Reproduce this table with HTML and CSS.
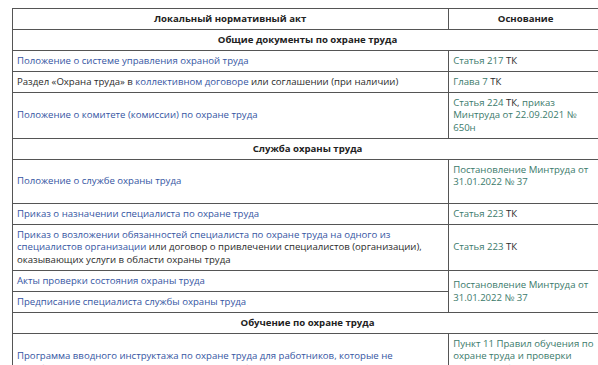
FILE: index.html
```html
<!DOCTYPE html>
<html lang="ru">
<head>
<meta charset="utf-8">
<title>Локальные нормативные акты</title>
<link rel="stylesheet" href="styles.css">
</head>
<body>
<div class="page">
<table class="acts">
  <colgroup><col class="col-act"><col class="col-base"></colgroup>
  <thead>
    <tr><th>Локальный нормативный акт</th><th>Основание</th></tr>
  </thead>
  <tbody>
    <tr class="section"><td colspan="2">Общие документы по охране труда</td></tr>
    <tr>
      <td><a class="doc" href="#">Положение о системе управления охраной труда</a></td>
      <td><a class="law" href="#">Статья 217</a> ТК</td>
    </tr>
    <tr>
      <td>Раздел «Охрана труда» в <a class="doc" href="#">коллективном договоре</a> или соглашении (при наличии)</td>
      <td><a class="law" href="#">Глава 7</a> ТК</td>
    </tr>
    <tr>
      <td><a class="doc" href="#">Положение о комитете (комиссии) по охране труда</a></td>
      <td><a class="law" href="#">Статья 224</a> ТК, <a class="law" href="#">приказ Минтруда от 22.09.2021 № 650н</a></td>
    </tr>
    <tr class="section"><td colspan="2">Служба охраны труда</td></tr>
    <tr>
      <td><a class="doc" href="#">Положение о службе охраны труда</a></td>
      <td class="extra"><a class="law" href="#">Постановление Минтруда от 31.01.2022 № 37</a></td>
    </tr>
    <tr>
      <td><a class="doc" href="#">Приказ о назначении специалиста по охране труда</a></td>
      <td><a class="law" href="#">Статья 223</a> ТК</td>
    </tr>
    <tr>
      <td><a class="doc" href="#">Приказ о возложении обязанностей специалиста по охране труда на одного из специалистов организации</a> или договор о привлечении специалистов (организации), оказывающих услуги в области охраны труда</td>
      <td><a class="law" href="#">Статья 223</a> ТК</td>
    </tr>
    <tr>
      <td><a class="doc" href="#">Акты проверки состояния охраны труда</a></td>
      <td rowspan="2"><a class="law" href="#">Постановление Минтруда от 31.01.2022 № 37</a></td>
    </tr>
    <tr>
      <td><a class="doc" href="#">Предписание специалиста службы охраны труда</a></td>
    </tr>
    <tr class="section"><td colspan="2">Обучение по охране труда</td></tr>
    <tr>
      <td><a class="doc" href="#">Программа вводного инструктажа по охране труда для работников, которые не освобождены от первичного инструктажа на рабочем месте</a></td>
      <td><a class="law" href="#">Пункт 11 Правил обучения по охране труда и проверки знания требований охраны труда</a></td>
    </tr>
  </tbody>
</table>
</div>
</body>
</html>
```

FILE: styles.css
```css
html, body {
  margin: 0;
  padding: 0;
  background: #fff;
}
.page {
  padding: 8px 0 0 12px;
  overflow: hidden;
  height: 365px;
  box-sizing: border-box;
}
.acts {
  width: 592px;
  border-collapse: collapse;
  font-family: "Open Sans", "Noto Sans", sans-serif;
  font-size: 9.6px;
  line-height: 12.5px;
  color: #2b2b2b;
}
.col-act { width: 437px; }
.col-base { width: 155px; }
.acts th,
.acts td {
  border: 1px solid #555;
  padding: 3.75px 5px 3.75px 4px;
  text-align: left;
  vertical-align: middle;
}
.acts th {
  font-weight: 700;
  text-align: center;
  color: #222;
}
.acts .section td {
  font-weight: 700;
  text-align: center;
  color: #222;
}
.acts td.extra {
  padding-bottom: 14.25px;
}
.doc {
  color: #3656a3;
  text-decoration: none;
}
.law {
  color: #3b7a6b;
  text-decoration: none;
}
```
